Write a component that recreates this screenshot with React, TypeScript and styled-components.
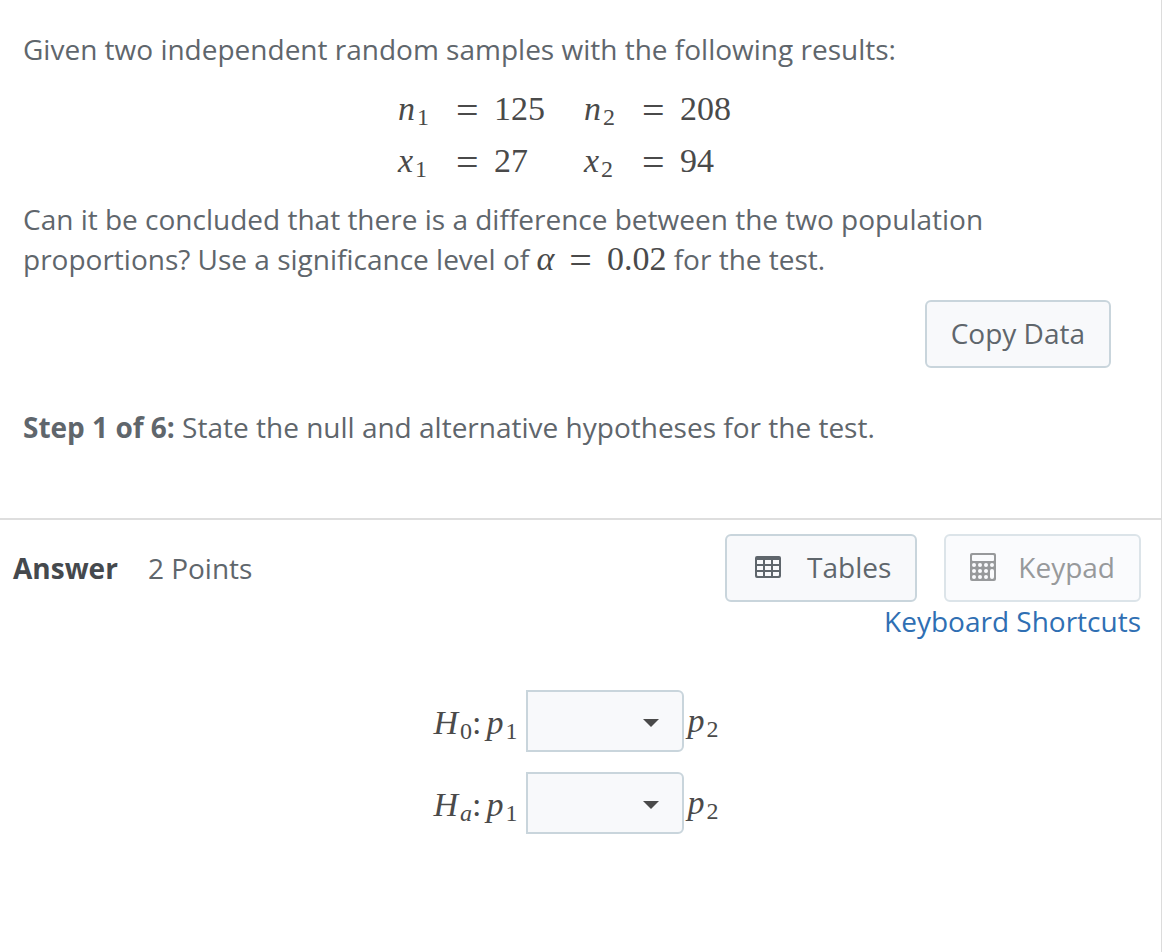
import React from 'react';
import styled, { createGlobalStyle } from 'styled-components';

const GlobalStyle = createGlobalStyle`
  *, *::before, *::after { box-sizing: border-box; }
  body {
    margin: 0;
    background: #fff;
    color: #5f666c;
    font-family: 'Open Sans', 'Noto Sans', sans-serif;
    font-size: 28px;
    line-height: 40px;
  }
`;

const Page = styled.main`
  min-height: 100vh;
  border-right: 1px solid #dcdcdc;
`;

const Prompt = styled.section`
  display: flex;
  flex-direction: column;
  padding: 29px 50px 71px 23px;
  border-bottom: 2px solid #dedede;
`;

const Text = styled.p`
  margin: 0;
`;

const MathText = styled.span`
  font-family: 'Liberation Serif', 'Times New Roman', serif;
  font-size: 34px;
  line-height: 40px;
  color: #4a4a4a;
  white-space: nowrap;
`;

const Sub = styled.sub`
  margin-left: 2px;
  font-size: 24px;
  line-height: 0;
  vertical-align: -5px;
`;

const Operator = styled.span<{ $spaced?: boolean }>`
  margin: 0 ${(p) => (p.$spaced ? 15 : 0)}px;
  font-size: 40px;
  line-height: 0;
  vertical-align: -4px;
`;

const Equations = styled.table`
  align-self: center;
  margin: 20px 0 6px;
  border-collapse: collapse;
`;

const Cell = styled.td<{ $width: number }>`
  width: ${(p) => p.$width}px;
  height: 52px;
  padding: 0;
  vertical-align: top;
`;

const Button = styled.button`
  display: flex;
  align-items: center;
  justify-content: center;
  height: 68px;
  padding: 0 24px 2px;
  border: 2px solid #c9d5dc;
  border-radius: 6px;
  background: #f8f9fb;
  color: #5f666c;
  font: inherit;
  cursor: pointer;

  &:disabled {
    border-color: #dce4e9;
    background: #fafbfd;
    color: #97999b;
    cursor: default;
  }
`;

const CopyButton = styled(Button)`
  align-self: flex-end;
  margin: 21px 0 39px;
`;

const ToolButton = styled(Button)<{ $inset: number; $gap: number }>`
  padding-left: ${(p) => p.$inset}px;
  gap: ${(p) => p.$gap}px;
`;

const AnswerBar = styled.header`
  display: flex;
  justify-content: space-between;
  padding: 14px 20px 0 13px;
`;

const Heading = styled.div`
  display: flex;
  align-items: baseline;
  gap: 30px;
  padding-top: 14px;
`;

const Title = styled.h2`
  margin: 0;
  color: #45494d;
  font-size: 28px;
  line-height: 40px;
`;

const Tools = styled.div`
  display: flex;
  flex-direction: column;
  align-items: flex-end;
`;

const ToolRow = styled.div`
  display: flex;
  gap: 27px;
`;

const ToolIcon = styled.svg`
  width: 28px;
  height: 28px;
  flex: none;
`;

const ShortcutLink = styled.a`
  margin-top: -1px;
  color: #2f6fb3;
  text-decoration: none;
`;

const Hypotheses = styled.div`
  display: flex;
  flex-direction: column;
  align-items: center;
  gap: 20px;
  padding: 49px 20px 48px 0;
`;

const HypothesisRow = styled.div`
  display: flex;
  align-items: center;
`;

const HypothesisLabel = styled.label`
  display: flex;
  justify-content: flex-end;
  gap: 5px;
  width: 95px;
  margin-right: 8px;
  padding-top: 4px;
`;

const SelectBox = styled.div`
  position: relative;
  width: 158px;
  margin-right: 4px;
`;

const Select = styled.select`
  display: block;
  appearance: none;
  width: 100%;
  height: 62px;
  padding: 0 48px 0 16px;
  border: 2px solid #c9d5dc;
  border-radius: 0 6px 6px 0;
  background: #f8f9fb;
  color: #4a4a4a;
  font: inherit;
`;

const Caret = styled.svg`
  position: absolute;
  top: 29px;
  right: 25px;
  width: 16px;
  height: 8px;
  pointer-events: none;
`;

const equations = [
  [['n', '1', '125'], ['n', '2', '208']],
  [['x', '1', '27'], ['x', '2', '94']],
];

const Variable = ({ name, sub }: { name: string; sub: string }) => (
  <MathText><i>{name}</i><Sub>{sub}</Sub></MathText>
);

const TablesIcon = () => (
  <ToolIcon viewBox="0 0 28 28" aria-hidden="true">
    <path
      fill="currentColor"
      fillRule="evenodd"
      d="M3 3h22a2 2 0 0 1 2 2v18a2 2 0 0 1-2 2H3a2 2 0 0 1-2-2V5a2 2 0 0 1 2-2ZM3 7v4h6V7ZM11 7v4h6V7ZM19 7v4h6V7ZM3 13v4h6v-4ZM11 13v4h6v-4ZM19 13v4h6v-4ZM3 19v3q0 1 1 1h5v-4ZM11 19v4h6v-4ZM19 19v4h5q1 0 1-1v-3Z"
    />
  </ToolIcon>
);

const KeypadIcon = () => (
  <ToolIcon viewBox="0 0 28 28" aria-hidden="true">
    <rect x="0" y="0" width="26" height="28" rx="2" fill="currentColor" />
    <rect x="2" y="2" width="22" height="6" rx="1" fill="#fafbfd" />
    <g fill="#fafbfd">
      {[12, 18, 24].map((y) =>
        [4, 10, 16].map((x) => <circle key={`${x}-${y}`} cx={x} cy={y} r="2" />),
      )}
      <circle cx="22" cy="12" r="2" />
      <rect x="20" y="16" width="4" height="10" rx="2" />
    </g>
  </ToolIcon>
);

const Hypothesis = ({ id, sub }: { id: string; sub: React.ReactNode }) => (
  <HypothesisRow>
    <HypothesisLabel htmlFor={id}>
      <MathText><i>H</i><Sub>{sub}</Sub>:</MathText>
      <Variable name="p" sub="1" />
    </HypothesisLabel>
    <SelectBox>
      <Select id={id} defaultValue="">
        <option value="" />
        <option>=</option>
        <option>≠</option>
        <option>&lt;</option>
        <option>&gt;</option>
      </Select>
      <Caret viewBox="0 0 16 8" aria-hidden="true">
        <path d="M0 0H16L8 8Z" fill="#4a4a4a" />
      </Caret>
    </SelectBox>
    <Variable name="p" sub="2" />
  </HypothesisRow>
);

export default function App() {
  return (
    <>
      <GlobalStyle />
      <Page>
        <Prompt>
          <Text>Given two independent random samples with the following results:</Text>
          <Equations>
            <tbody>
              {equations.map(([left, right]) => (
                <tr key={left[0]}>
                  <Cell $width={58}><Variable name={left[0]} sub={left[1]} /></Cell>
                  <Cell $width={38}><MathText><Operator>=</Operator></MathText></Cell>
                  <Cell $width={90}><MathText>{left[2]}</MathText></Cell>
                  <Cell $width={58}><Variable name={right[0]} sub={right[1]} /></Cell>
                  <Cell $width={38}><MathText><Operator>=</Operator></MathText></Cell>
                  <Cell $width={56}><MathText>{right[2]}</MathText></Cell>
                </tr>
              ))}
            </tbody>
          </Equations>
          <Text>
            Can it be concluded that there is a difference between the two population
            proportions? Use a significance level of{' '}
            <MathText><i>α</i><Operator $spaced>=</Operator>0.02</MathText> for the test.
          </Text>
          <CopyButton type="button">Copy Data</CopyButton>
          <Text><b>Step 1 of 6:</b> State the null and alternative hypotheses for the test.</Text>
        </Prompt>
        <section>
          <AnswerBar>
            <Heading>
              <Title>Answer</Title>
              <span>2 Points</span>
            </Heading>
            <Tools>
              <ToolRow>
                <ToolButton type="button" $inset={27} $gap={25}><TablesIcon />Tables</ToolButton>
                <ToolButton type="button" disabled $inset={24} $gap={20}><KeypadIcon />Keypad</ToolButton>
              </ToolRow>
              <ShortcutLink href="#shortcuts">Keyboard Shortcuts</ShortcutLink>
            </Tools>
          </AnswerBar>
          <Hypotheses>
            <Hypothesis id="null-hypothesis" sub="0" />
            <Hypothesis id="alternative-hypothesis" sub={<i>a</i>} />
          </Hypotheses>
        </section>
      </Page>
    </>
  );
}
